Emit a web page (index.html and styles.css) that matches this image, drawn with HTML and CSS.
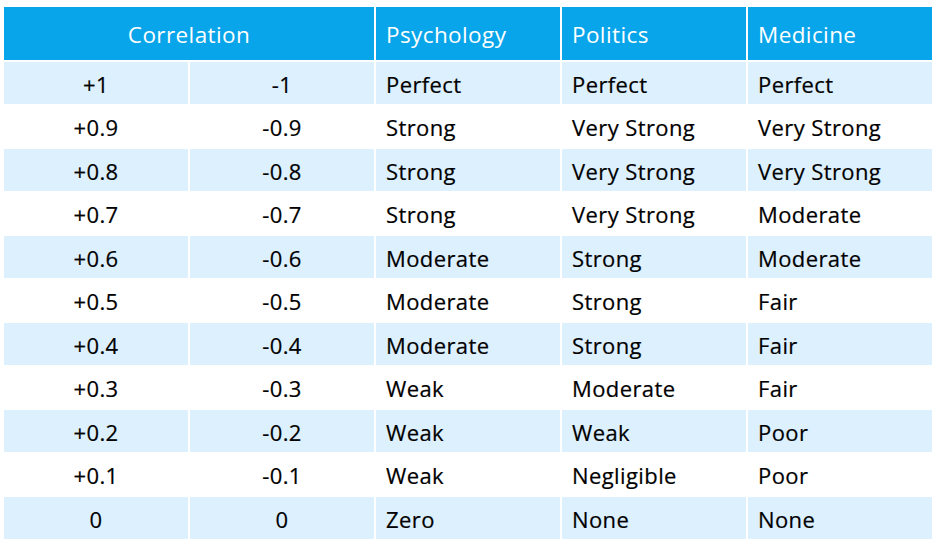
FILE: index.html
```html
<!DOCTYPE html>
<html lang="en">
<head>
<meta charset="utf-8">
<title>Correlation</title>
<link rel="stylesheet" href="styles.css">
</head>
<body>
<table class="corr">
  <thead>
    <tr>
      <th colspan="2" class="center">Correlation</th>
      <th>Psychology</th>
      <th>Politics</th>
      <th>Medicine</th>
    </tr>
  </thead>
  <tbody>
    <tr class="alt"><td class="center">+1</td><td class="center">-1</td><td>Perfect</td><td>Perfect</td><td>Perfect</td></tr>
    <tr><td class="center">+0.9</td><td class="center">-0.9</td><td>Strong</td><td>Very Strong</td><td>Very Strong</td></tr>
    <tr class="alt"><td class="center">+0.8</td><td class="center">-0.8</td><td>Strong</td><td>Very Strong</td><td>Very Strong</td></tr>
    <tr><td class="center">+0.7</td><td class="center">-0.7</td><td>Strong</td><td>Very Strong</td><td>Moderate</td></tr>
    <tr class="alt"><td class="center">+0.6</td><td class="center">-0.6</td><td>Moderate</td><td>Strong</td><td>Moderate</td></tr>
    <tr><td class="center">+0.5</td><td class="center">-0.5</td><td>Moderate</td><td>Strong</td><td>Fair</td></tr>
    <tr class="alt"><td class="center">+0.4</td><td class="center">-0.4</td><td>Moderate</td><td>Strong</td><td>Fair</td></tr>
    <tr><td class="center">+0.3</td><td class="center">-0.3</td><td>Weak</td><td>Moderate</td><td>Fair</td></tr>
    <tr class="alt"><td class="center">+0.2</td><td class="center">-0.2</td><td>Weak</td><td>Weak</td><td>Poor</td></tr>
    <tr><td class="center">+0.1</td><td class="center">-0.1</td><td>Weak</td><td>Negligible</td><td>Poor</td></tr>
    <tr class="alt"><td class="center">0</td><td class="center">0</td><td>Zero</td><td>None</td><td>None</td></tr>
  </tbody>
</table>
</body>
</html>
```
FILE: styles.css
```css
html, body {
  margin: 0;
  padding: 0;
  background: #ffffff;
}
body {
  padding: 5px 2px;
  font-family: "Open Sans", "Liberation Sans", sans-serif;
  color: #000000;
}
.corr {
  width: 932px;
  table-layout: fixed;
  border-collapse: separate;
  border-spacing: 2px;
  font-size: 22px;
  letter-spacing: 0.4px;
}
.corr th,
.corr td {
  box-sizing: border-box;
  padding: 2px 10px 0;
  text-align: left;
  vertical-align: middle;
  font-weight: 400;
  white-space: nowrap;
}
.corr th {
  height: 53px;
  background: #08a5ea;
  color: #ffffff;
  font-size: 22.5px;
  padding-top: 1px;
}
.corr td {
  height: 41.5px;
  -webkit-text-stroke: 0.2px #000000;
}
.corr tr.alt td {
  background: #ddf0fe;
}
.corr .center {
  text-align: center;
}
```
